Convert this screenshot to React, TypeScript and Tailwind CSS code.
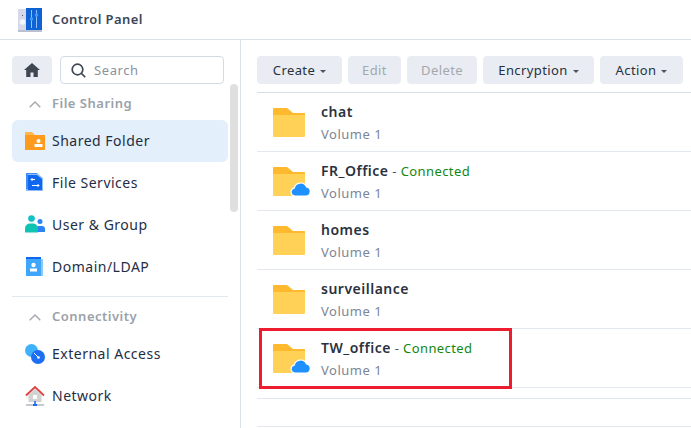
const font = "[font-family:'Noto_Sans',sans-serif]"

function Folder({ cloud }: { cloud?: boolean }) {
    return (
        <svg width="38" height="32" viewBox="0 0 38 32" className="shrink-0">
            <path d="M0 3a1 1 0 0 1 1-1h13l6 5h11.500a.5.500 0 0 1 .5.5V12H0z" fill="#ffb92e" />
            <path d="M0 9h32v21a1 1 0 0 1-1 1H1a1 1 0 0 1-1-1z" fill="#ffd257" />
            {cloud && (
                <path
                    d="M22 31a4 4 0 0 1-.8-7.900 6.500 6.500 0 0 1 12.300-1.200A4.600 4.600 0 0 1 33 31z"
                    fill="#1e90ff"
                    stroke="#fff"
                    strokeWidth="1.200"
                />
            )}
        </svg>
    )
}

function AppIcon() {
    return (
        <svg width="24" height="24" viewBox="0 0 24 24">
            <rect x="0" y="1" width="10" height="21" fill="#d5d9ea" />
            <rect x="8" y="0" width="16" height="22" fill="#0f62d6" />
            <rect x="0" y="22" width="24" height="2" fill="#b9c0d2" />
            <circle cx="4.500" cy="14" r="2.800" fill="#f4f6fb" />
            <rect x="4" y="7" width="1" height="1" fill="#555" />
            <rect x="13" y="2" width="1" height="18" fill="#8fc2fb" />
            <rect x="18" y="2" width="1" height="18" fill="#8fc2fb" />
            <circle cx="13.500" cy="11" r="1.800" fill="#3d9bf7" />
            <circle cx="18.500" cy="7" r="1.800" fill="#3d9bf7" />
        </svg>
    )
}

function SharedFolderIcon() {
    return (
        <svg width="20" height="20" viewBox="0 0 20 20">
            <path d="M0 1h7l3 3h10v3H0z" fill="#fdb84f" />
            <path d="M0 4h20v15H0z" fill="#fe9a1e" />
            <circle cx="13.500" cy="10" r="2" fill="#fff" />
            <rect x="9.500" y="13" width="8" height="3" fill="#fff" />
        </svg>
    )
}

function FileServicesIcon() {
    return (
        <svg width="20" height="20" viewBox="0 0 20 20">
            <path d="M1 0h11l6 5v13H1z" fill="#8fbdfb" />
            <path d="M1 0h11v1H1zM1 1h2v15H1z" fill="#3f8cf5" />
            <path d="M3 2h9l5 4v11H3z" fill="#0f67f0" />
            <path d="M10 6.500H6M7.500 5 6 6.500 7.500 8M7 12.500h7M12.500 11l1.500 1.500-1.500 1.500" stroke="#fff" strokeWidth="1" fill="none" />
        </svg>
    )
}

function UserGroupIcon() {
    return (
        <svg width="20" height="20" viewBox="0 0 20 20">
            <circle cx="15" cy="6.500" r="2.500" fill="#2b83f6" />
            <path d="M11 17v-3a3 3 0 0 1 3-3h3a3 3 0 0 1 3 3v3z" fill="#2b83f6" />
            <circle cx="6.500" cy="3.500" r="3.300" fill="#13c0c5" />
            <path d="M0 17.500v-4a5 5 0 0 1 5-5h3a5 5 0 0 1 5 5v4z" fill="#10c4b4" />
        </svg>
    )
}

function DomainIcon() {
    return (
        <svg width="20" height="20" viewBox="0 0 20 20">
            <rect x="1" y="0" width="15" height="3" fill="#0f67f0" />
            <rect x="1" y="2" width="17" height="17" fill="#8cc8fc" />
            <rect x="1" y="2" width="15" height="17" fill="#3ea6fb" />
            <circle cx="8.500" cy="8" r="2.200" fill="#fff" />
            <rect x="5" y="11.500" width="7" height="3" fill="#fff" />
        </svg>
    )
}

function ExternalIcon() {
    return (
        <svg width="20" height="20" viewBox="0 0 20 20">
            <circle cx="6.500" cy="6.500" r="6.500" fill="#3eb2fb" />
            <circle cx="13" cy="13" r="7" fill="#1c6ff2" />
            <path d="M9 9l4.500 4.500" stroke="#fff" strokeWidth="1" />
            <circle cx="13.500" cy="13.500" r="1.300" fill="#fff" />
        </svg>
    )
}

function NetworkIcon() {
    return (
        <svg width="20" height="20" viewBox="0 0 20 20">
            <path d="M3.500 9 10 3l6.500 6v7h-13z" fill="#d2d2d2" />
            <path d="M1 9.500 10 1l9 8.500" stroke="#d8423f" strokeWidth="1.800" fill="none" />
            <rect x="8" y="9" width="4" height="4" fill="#fff" />
            <rect x="1" y="18" width="18" height="2" fill="#c5c9d0" />
            <path d="M8 20v-2h1.200v-3h1.600v3H12v2z" fill="#1c6ff2" />
        </svg>
    )
}

function Chevron() {
    return (
        <svg width="12" height="7" viewBox="0 0 12 7" fill="none" stroke="#a3a8b0" strokeWidth="1.400" className="shrink-0">
            <path d="M.7 6.300 6 1l5.300 5.300" />
        </svg>
    )
}

function Caret() {
    return <span className="ml-[5px] mt-px border-x-[3px] border-t-[3px] border-x-transparent border-t-[#4a5360]" />
}

function SectionTitle({ label }: { label: string }) {
    return (
        <div className="flex h-9 items-center gap-[11px] pl-[17px] pt-1 text-[13px] font-semibold tracking-[0.5px] text-[#9ba1a9]">
            <Chevron />
            <span>{label}</span>
        </div>
    )
}

function NavItem({ icon, label, active }: { icon: React.ReactNode; label: string; active?: boolean }) {
    return (
        <div className={`flex h-[42px] items-center gap-[7px] rounded-md pl-[13px] text-[14px] tracking-[0.5px] text-[#1f2d45] ${active ? 'bg-[#e3effa]' : ''}`}>
            <span className="flex w-5 shrink-0">{icon}</span>
            <span className="pb-0.5">{label}</span>
        </div>
    )
}

function ToolButton({ label, width, caret, disabled }: { label: string; width: string; caret?: boolean; disabled?: boolean }) {
    return (
        <button className={`flex h-7 items-center justify-center rounded-[4px] pt-0.5 text-[13px] tracking-[0.4px] ${width} ${disabled ? 'bg-[#e9edf3] text-[#a3a8ad]' : 'bg-[#e9edf3] text-[#27313f]'}`}>
            {label}
            {caret && <Caret />}
        </button>
    )
}

function Row({ name, connected, cloud }: { name: string; connected?: boolean; cloud?: boolean }) {
    return (
        <div className="flex h-[59px] items-center border-b border-[#e3e8f0] pl-4">
            <Folder cloud={cloud} />
            <div className="ml-[10px] flex flex-col gap-[2px] pt-px">
                <div className="text-[13px] leading-[20px] tracking-[0.4px]">
                    <span className="text-[14px] font-semibold tracking-[0.5px] text-[#2a3240]">{name}</span>
                    {connected && (
                        <span className="text-[#4a5360]">
                            {' '}- <span className="text-[#12870f]">Connected</span>
                        </span>
                    )}
                </div>
                <div className="text-[13px] leading-[20px] tracking-[0.5px] text-[#7c8694]">Volume 1</div>
            </div>
        </div>
    )
}

export default function App() {
    return (
        <div className={`flex h-[428px] w-[691px] flex-col overflow-hidden bg-white ${font}`}>
            <header className="flex h-10 shrink-0 items-center gap-[10px] border-b border-[#d9e1ea] pl-[18px]">
                <AppIcon />
                <h1 className="text-[13px] font-semibold tracking-[0.4px] text-[#3c4657]">Control Panel</h1>
            </header>
            <div className="flex min-h-0 flex-1">
                <aside className="relative w-[241px] shrink-0 border-r border-[#d9e1ea] pl-3 pr-3 pt-4">
                    <div className="flex gap-2">
                        <button className="flex h-7 w-10 items-center justify-center rounded-[4px] bg-[#e9edf3]">
                            <svg width="16" height="14" viewBox="0 0 16 14" fill="#3f4753">
                                <path d="M8 0 0 7h2.200v7H6.500V9.500h3V14h4.300V7H16z" />
                            </svg>
                        </button>
                        <div className="flex h-7 w-[164px] items-center gap-2 rounded-[4px] border border-[#d0dbe6] pl-[10px] text-[13px] tracking-[0.6px] text-[#8a929c]">
                            <svg width="15" height="15" viewBox="0 0 15 15" fill="none" stroke="#3f4753" strokeWidth="1.700" className="shrink-0">
                                <circle cx="6.500" cy="6.500" r="5.300" />
                                <path d="m10.500 10.500 3.700 3.700" />
                            </svg>
                            <span className="pt-0.5">Search</span>
                        </div>
                    </div>
                    <div className="w-[216px]">
                        <SectionTitle label="File Sharing" />
                        <NavItem active icon={<SharedFolderIcon />} label="Shared Folder" />
                        <NavItem icon={<FileServicesIcon />} label="File Services" />
                        <NavItem icon={<UserGroupIcon />} label="User & Group" />
                        <NavItem icon={<DomainIcon />} label="Domain/LDAP" />
                        <div className="mt-2 border-t border-[#e1e8f2]" />
                        <SectionTitle label="Connectivity" />
                        <NavItem icon={<ExternalIcon />} label="External Access" />
                        <NavItem icon={<NetworkIcon />} label="Network" />
                    </div>
                    <div className="absolute left-[230px] top-11 h-32 w-2 rounded-full bg-[#dfdfdf]" />
                </aside>
                <main className="min-w-0 flex-1 pl-4 pt-4">
                    <div className="flex gap-[6px]">
                        <ToolButton label="Create" width="w-[85px]" caret />
                        <ToolButton label="Edit" width="w-[53px]" disabled />
                        <ToolButton label="Delete" width="w-[70px]" disabled />
                        <ToolButton label="Encryption" width="w-[111px]" caret />
                        <ToolButton label="Action" width="w-[83px]" caret />
                    </div>
                    <div className="relative mt-2 border-t border-[#d3dfea]">
                        <Row name="chat" />
                        <Row name="FR_Office" connected cloud />
                        <Row name="homes" />
                        <Row name="surveillance" />
                        <Row name="TW_office" connected cloud />
                        <div className="absolute left-[2px] top-[235px] h-[61px] w-[253px] border-[3px] border-[#ed1c2e]" />
                        <div className="h-[11px] border-b border-[#e3e8f0]" />
                        <div className="h-7 border-b border-[#e3e8f0]" />
                    </div>
                </main>
            </div>
        </div>
    )
}
